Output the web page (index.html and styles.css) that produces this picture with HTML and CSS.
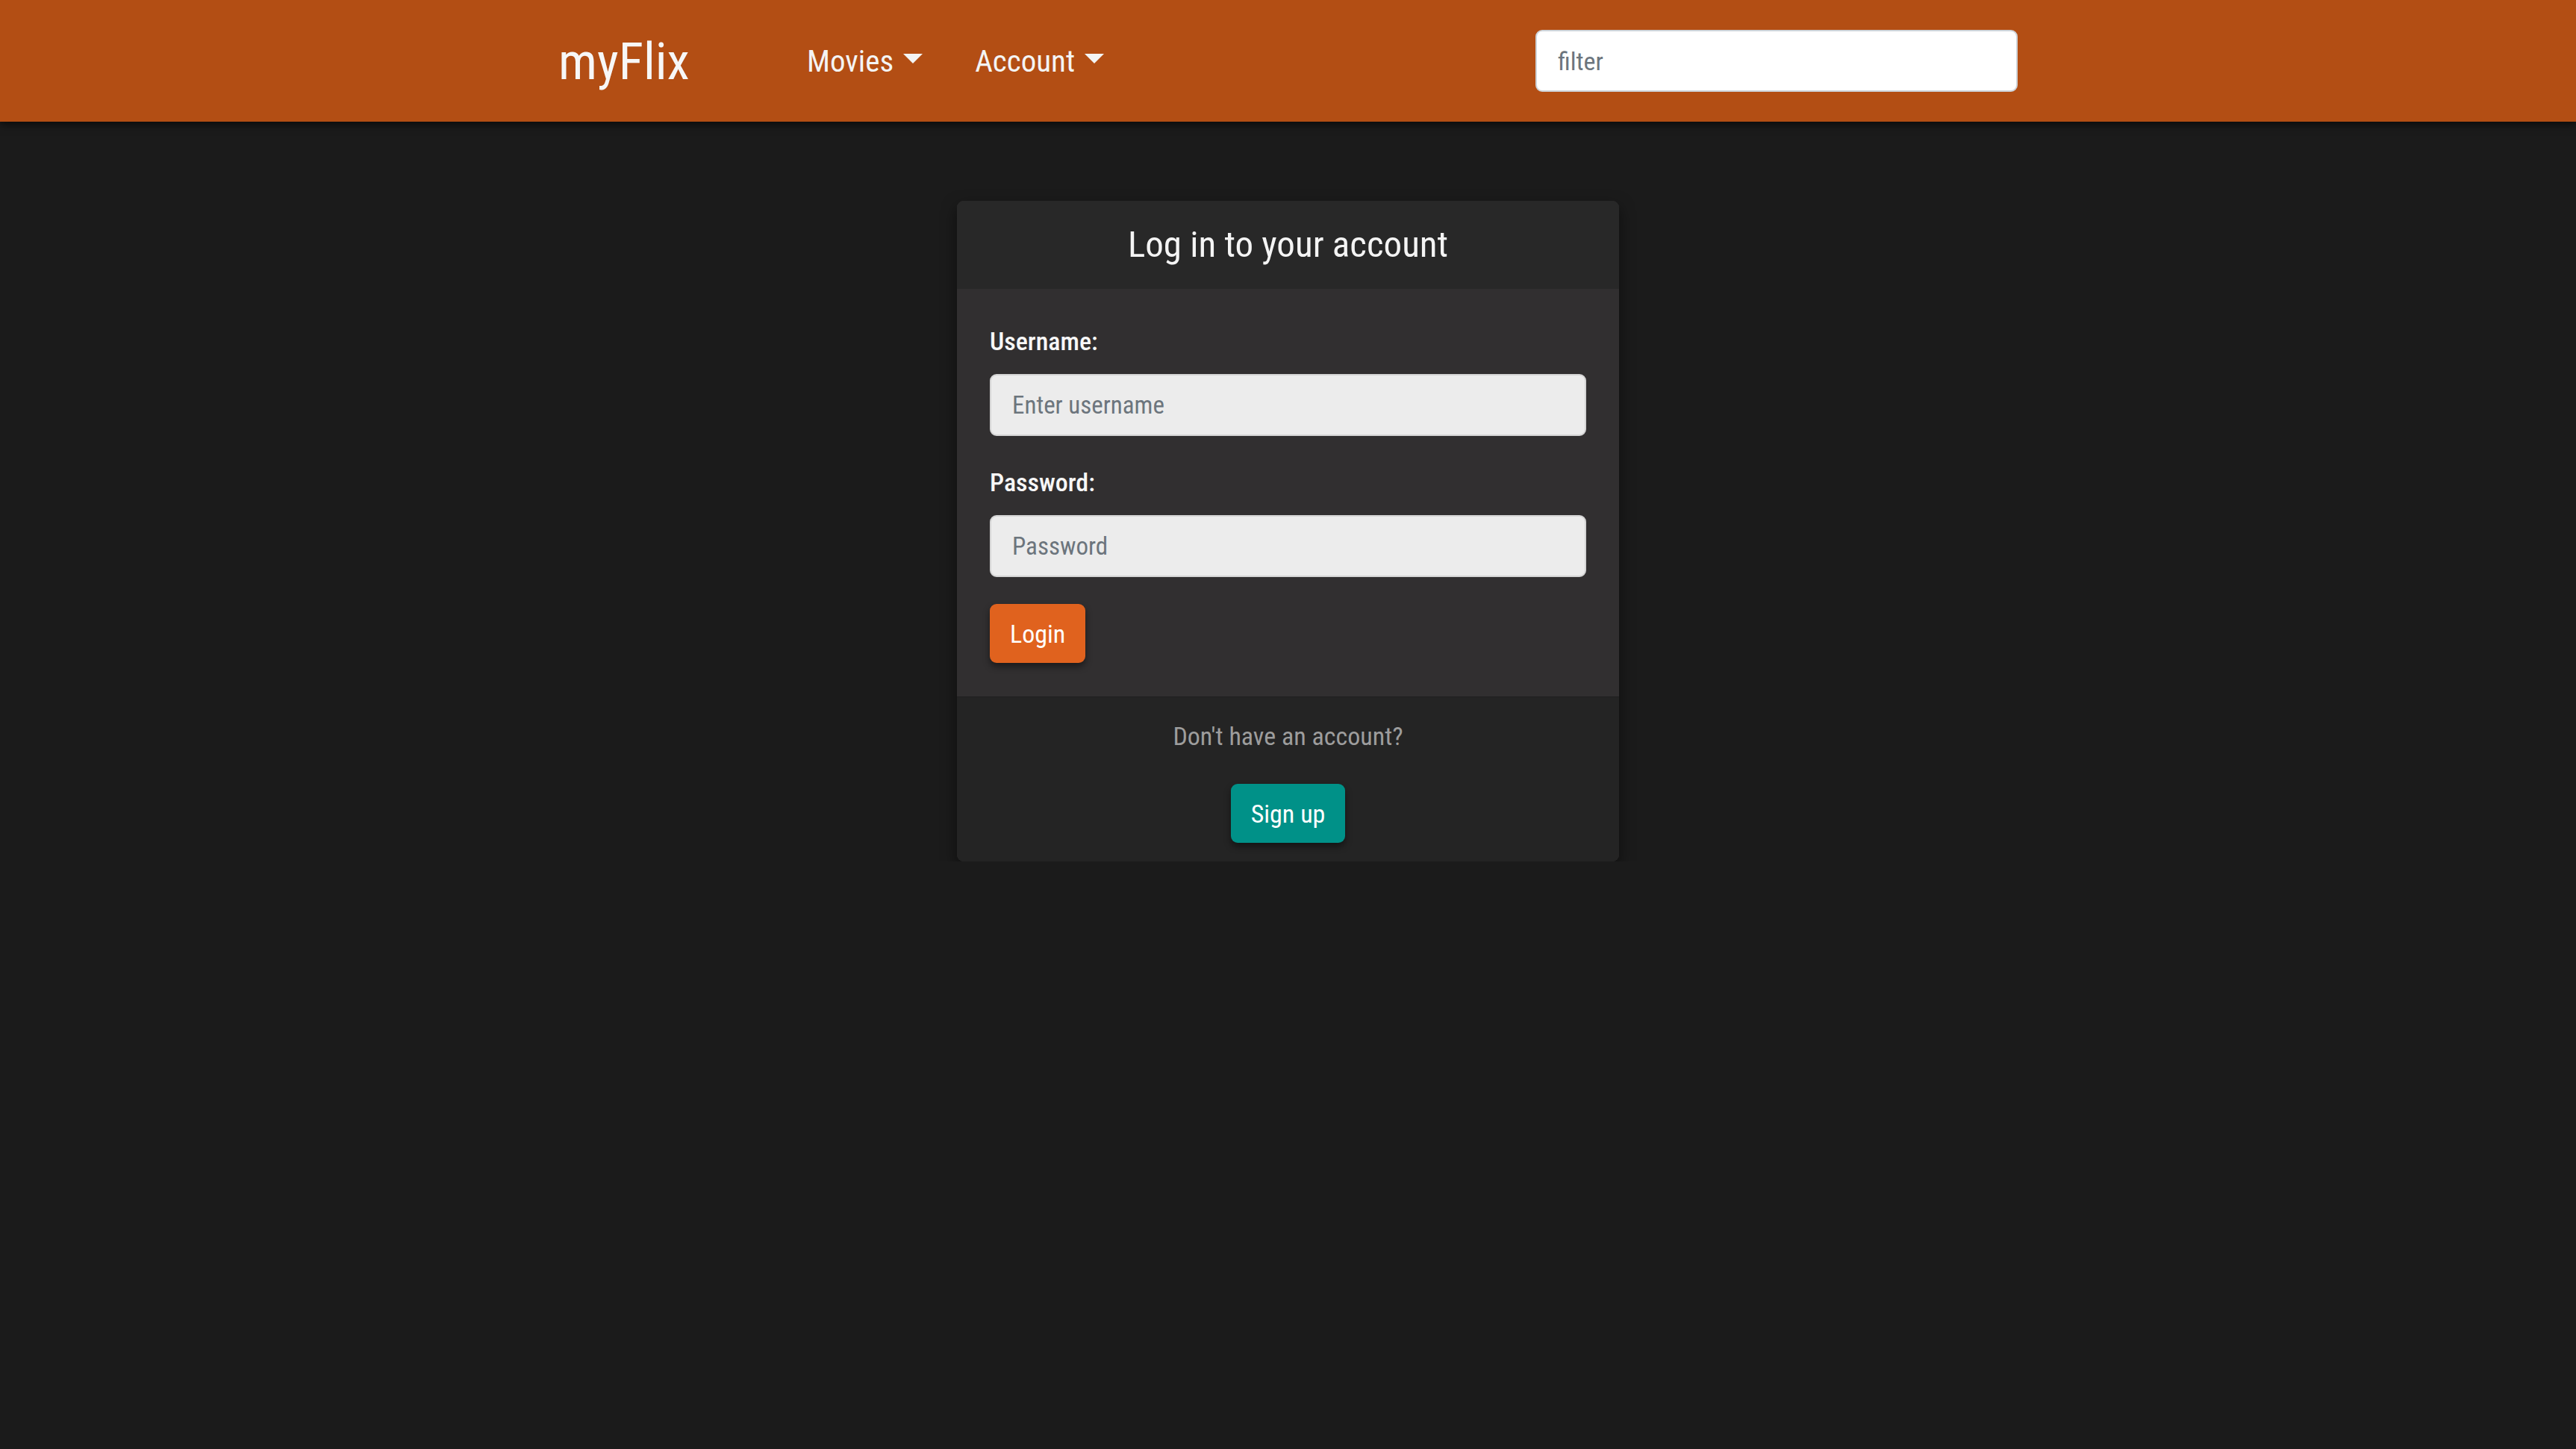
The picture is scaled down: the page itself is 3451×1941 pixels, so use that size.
FILE: index.html
```html
<!DOCTYPE html>
<html lang="en">
<head>
  <meta charset="UTF-8">
  <meta name="viewport" content="width=device-width, initial-scale=1.0">
  <title>myFlix</title>
  <link rel="stylesheet" href="styles.css">
</head>
<body>
  <!-- Top navigation -->
  <nav class="navbar">
    <div class="nav-container">
      <a class="brand" href="#">myFlix</a>
      <ul class="nav-links">
        <li><a class="nav-link dropdown-toggle" href="#">Movies</a></li>
        <li><a class="nav-link dropdown-toggle" href="#">Account</a></li>
      </ul>
      <input class="filter-input" type="text" placeholder="filter">
    </div>
  </nav>

  <!-- Login card -->
  <main class="page">
    <div class="card">
      <div class="card-header">
        <h3 class="card-title">Log in to your account</h3>
      </div>
      <form class="card-body">
        <div class="form-group">
          <label for="username">Username:</label>
          <input class="form-control" id="username" type="text" placeholder="Enter username">
        </div>
        <div class="form-group">
          <label for="password">Password:</label>
          <input class="form-control" id="password" type="password" placeholder="Password">
        </div>
        <button class="btn btn-login" type="submit">Login</button>
      </form>
      <div class="card-footer">
        <p class="signup-text">Don't have an account?</p>
        <button class="btn btn-signup" type="button">Sign up</button>
      </div>
    </div>
  </main>
</body>
</html>
```

FILE: styles.css
```css
body {
  margin: 0;
  padding: 0;
  background: #1b1b1b;
  font-family: "Roboto Condensed", "Open Sans", sans-serif;
  font-size: 34px;
  line-height: 53px;
  color: #fff;
}

/* Navbar */
.navbar {
  height: 163px;
  background: #b34e14;
  box-shadow: 0 4px 10px rgba(0, 0, 0, 0.6);
}

.nav-container {
  width: 1955px;
  height: 100%;
  margin: 0 auto;
  display: flex;
  align-items: center;
}

.brand {
  width: 333px;
  color: #f7f7f7;
  text-decoration: none;
  font-size: 69px;
  line-height: 1;
  padding-top: 2px;
}

.nav-links {
  list-style: none;
  margin: 0;
  padding: 4px 0 0;
  display: flex;
  gap: 70px;
}

.nav-link {
  color: #f4f4f4;
  text-decoration: none;
  font-size: 41px;
}

.dropdown-toggle::after {
  content: "";
  display: inline-block;
  margin-left: 13px;
  vertical-align: 11px;
  border-top: 13px solid #f4f4f4;
  border-left: 13px solid transparent;
  border-right: 13px solid transparent;
}

.filter-input {
  margin-left: auto;
  width: 646px;
  height: 83px;
  box-sizing: border-box;
  padding: 0 28px;
  border: 2px solid #ced4da;
  border-radius: 9px;
  background: #fff;
  font-family: inherit;
  font-size: 34px;
  color: #495057;
}

.filter-input::placeholder {
  color: #6c757d;
}

/* Login card */
.page {
  display: flex;
  justify-content: center;
  padding-top: 106px;
}

.card {
  width: 887px;
  border-radius: 9px;
  overflow: hidden;
  background: #312f30;
  box-shadow: 0 8px 20px rgba(0, 0, 0, 0.5);
}

.card-header {
  background: #282828;
  height: 118px;
  display: flex;
  align-items: center;
  justify-content: center;
}

.card-title {
  margin: 0;
  font-size: 49px;
  font-weight: normal;
  line-height: 1.2;
  color: #f4f4f4;
}

.card-body {
  padding: 44px 44px 45px;
  margin: 0;
}

.form-group {
  margin-bottom: 36px;
}

label {
  display: block;
  margin-bottom: 17px;
  font-weight: 500;
  color: #f7f7f7;
}

.form-control {
  display: block;
  width: 100%;
  height: 83px;
  box-sizing: border-box;
  padding: 0 28px;
  border: 2px solid #d4d4d4;
  border-radius: 9px;
  background: #ececec;
  font-family: inherit;
  font-size: 33px;
  color: #495057;
}

.form-control::placeholder {
  color: #6c757d;
}

.btn {
  height: 79px;
  padding: 0 27px;
  border: none;
  border-radius: 9px;
  font-family: inherit;
  font-size: 34px;
  color: #fff;
  cursor: pointer;
  box-shadow: 0 5px 10px rgba(0, 0, 0, 0.45);
}

.btn-login {
  background: #e0621e;
}

.btn-signup {
  background: #009188;
}

.card-footer {
  background: #242424;
  border-top: 1px solid #1e1e1e;
  padding: 26px 44px 25px;
  text-align: center;
}

.signup-text {
  margin: 0 0 37px;
  color: #9d9d9d;
}
```
